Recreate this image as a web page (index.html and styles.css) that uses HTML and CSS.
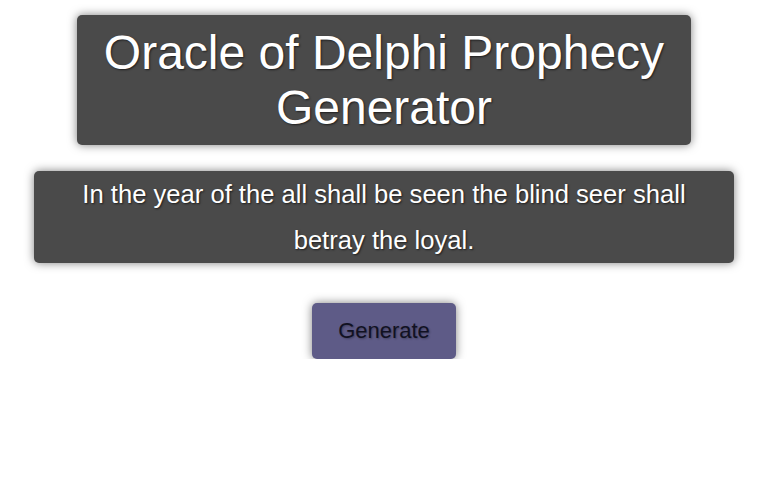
FILE: index.html
```html
<!DOCTYPE html>
<html lang="en">
<head>
    <meta charset="UTF-8">
    <meta name="viewport" content="width=device-width, initial-scale=1.0">
    <title>Oracle of Delphi Prophecy Generator</title>
    <link rel="stylesheet" href="styles.css">
</head>
<body>
    <div class="page">
        <h1 class="title">Oracle of Delphi Prophecy Generator</h1>

        <p class="prophecy" id="prophecy">In the year of the all shall be seen the blind seer shall betray the loyal.</p>

        <button class="generate" id="generate">Generate</button>
    </div>
</body>
</html>
```

FILE: styles.css
```css
body {
    font-family: "Liberation Sans", Arial, sans-serif;
    margin: 0;
    background-color: #ffffff;
}
.page {
    display: flex;
    flex-direction: column;
    align-items: center;
}
.title {
    width: 80%;
    box-sizing: border-box;
    margin: 15px 0 0;
    padding: 10px 20px;
    background-color: #4a4a4a;
    color: #ffffff;
    font-size: 48px;
    font-weight: normal;
    line-height: 55px;
    text-align: center;
    border-radius: 5px;
    box-shadow: 0 0 10px rgba(0, 0, 0, 0.5);
    text-shadow: 1px 1px 2px rgba(0, 0, 0, 0.6);
}
.prophecy {
    width: 700px;
    box-sizing: border-box;
    margin: 26px 0 0;
    padding: 0 40px;
    background-color: #4a4a4a;
    color: #ffffff;
    font-size: 25.6px;
    line-height: 46px;
    text-align: center;
    border-radius: 5px;
    box-shadow: 0 0 10px rgba(0, 0, 0, 0.5);
    text-shadow: 1px 1px 2px rgba(0, 0, 0, 0.6);
}
.generate {
    margin-top: 40px;
    padding: 16px 26px;
    border: none;
    border-radius: 5px;
    background-color: #5e5b87;
    color: #111122;
    font-family: "Liberation Sans", Arial, sans-serif;
    font-size: 22px;
    line-height: 24px;
    box-shadow: 0 0 10px rgba(0, 0, 0, 0.5);
    text-shadow: 1px 1px 2px rgba(0, 0, 0, 0.3);
    cursor: pointer;
}
```
